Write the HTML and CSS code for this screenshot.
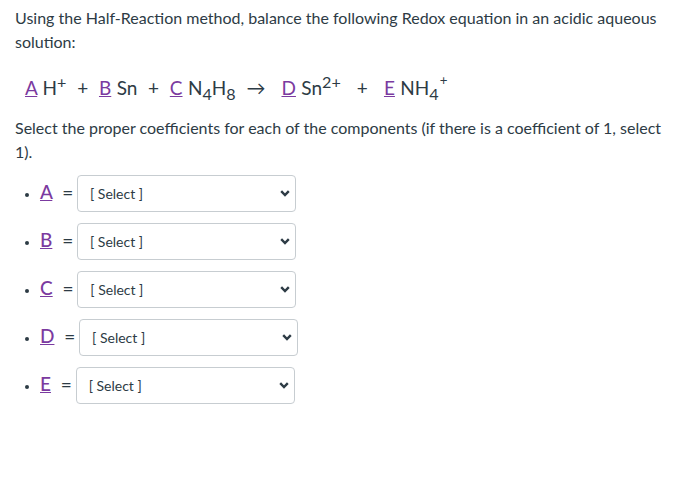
FILE: index.html
```html
<!DOCTYPE html>
<html lang="en">
<head>
  <meta charset="UTF-8">
  <meta name="viewport" content="width=device-width, initial-scale=1.0">
  <title>Quiz Question</title>
  <link rel="stylesheet" href="styles.css">
</head>
<body>
  <div class="question">
    <p>Using the Half-Reaction method, balance the following Redox equation in an acidic aqueous solution:</p>

    <p class="equation">
      <span class="coef">A</span> H<sup>+</sup> &nbsp;+&nbsp; <span class="coef">B</span> Sn &nbsp;+&nbsp; <span class="coef">C</span> N<sub>4</sub>H<sub>8</sub> &nbsp;&rarr;&nbsp; &nbsp;<span class="coef">D</span> Sn<sup>2+</sup> &nbsp; + &nbsp; <span class="coef">E</span> NH<sub>4</sub><sup class="ion">+</sup>
    </p>

    <p class="intro">Select the proper coefficients for each of the components (if there is a coefficient of 1, select 1).</p>

    <ul class="answers">
      <li><span class="coef">A</span> <span class="eq">=</span> <span class="select-wrap"><select><option>[ Select ]</option></select><svg class="chevron" viewBox="0 0 10 7" width="10" height="7"><path d="M1.2 1.2 L5 5 L8.8 1.2" fill="none" stroke="#2d3b45" stroke-width="2.4"/></svg></span></li>
      <li><span class="coef">B</span> <span class="eq">=</span> <span class="select-wrap"><select><option>[ Select ]</option></select><svg class="chevron" viewBox="0 0 10 7" width="10" height="7"><path d="M1.2 1.2 L5 5 L8.8 1.2" fill="none" stroke="#2d3b45" stroke-width="2.4"/></svg></span></li>
      <li><span class="coef">C</span> <span class="eq">=</span> <span class="select-wrap"><select><option>[ Select ]</option></select><svg class="chevron" viewBox="0 0 10 7" width="10" height="7"><path d="M1.2 1.2 L5 5 L8.8 1.2" fill="none" stroke="#2d3b45" stroke-width="2.4"/></svg></span></li>
      <li><span class="coef">D</span> <span class="eq">=</span> <span class="select-wrap"><select><option>[ Select ]</option></select><svg class="chevron" viewBox="0 0 10 7" width="10" height="7"><path d="M1.2 1.2 L5 5 L8.8 1.2" fill="none" stroke="#2d3b45" stroke-width="2.4"/></svg></span></li>
      <li><span class="coef">E</span> <span class="eq">=</span> <span class="select-wrap"><select><option>[ Select ]</option></select><svg class="chevron" viewBox="0 0 10 7" width="10" height="7"><path d="M1.2 1.2 L5 5 L8.8 1.2" fill="none" stroke="#2d3b45" stroke-width="2.4"/></svg></span></li>
    </ul>
  </div>
</body>
</html>
```

FILE: styles.css
```css
body {
  margin: 0;
  font-family: Lato, "Open Sans", sans-serif;
  color: #2d3b45;
  background-color: #fff;
}
.question {
  padding: 6px 15px;
  font-size: 16px;
  line-height: 24px;
}
.question p {
  margin: 0 0 16px 0;
}
.equation {
  font-size: 19px;
  padding-left: 10px;
  padding-top: 6px;
  word-spacing: 0.5px;
}
.question .intro {
  margin-bottom: 12px;
}
.coef {
  color: #7b3aa0;
  text-decoration: underline;
}
sup, sub {
  font-size: 85%;
  line-height: 0;
}
.ion {
  font-size: 70%;
  margin-left: 1px;
  vertical-align: 10px;
}
.answers {
  margin: 0;
  padding-left: 25px;
}
.answers li {
  margin-bottom: 11px;
  font-size: 19px;
  font-weight: 500;
}
.answers li::marker {
  font-size: 13px;
}
.eq {
  margin-left: 5px;
}
.select-wrap {
  position: relative;
  display: inline-block;
  vertical-align: middle;
  margin-left: -1px;
  top: -1px;
}
.select-wrap select {
  -webkit-appearance: none;
  appearance: none;
  width: 219px;
  height: 37px;
  padding: 0 12px;
  font-family: Lato, "Open Sans", sans-serif;
  font-size: 14px;
  color: #2d3b45;
  background-color: #fff;
  border: 1px solid #c7cdd1;
  border-radius: 4px;
}
.chevron {
  position: absolute;
  right: 6px;
  top: 15px;
  pointer-events: none;
}
```
